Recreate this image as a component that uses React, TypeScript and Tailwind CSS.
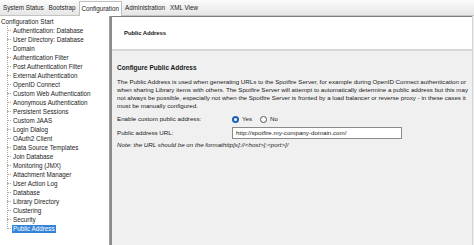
import React from "react";

const items = [
  "Authentication: Database",
  "User Directory: Database",
  "Domain",
  "Authentication Filter",
  "Post Authentication Filter",
  "External Authentication",
  "OpenID Connect",
  "Custom Web Authentication",
  "Anonymous Authentication",
  "Persistent Sessions",
  "Custom JAAS",
  "Login Dialog",
  "OAuth2 Client",
  "Data Source Templates",
  "Join Database",
  "Monitoring (JMX)",
  "Attachment Manager",
  "User Action Log",
  "Database",
  "Library Directory",
  "Clustering",
  "Security",
  "Public Address",
];

const tabs = ["System Status", "Bootstrap", "Configuration", "Administration", "XML View"];

export default function App() {
  return (
    <div
      className="w-[474px] h-[245px] bg-[#f0f0f0] flex flex-col overflow-hidden text-[#1a1a1a]"
      style={{ fontFamily: '"Liberation Sans", Arial, sans-serif' }}
    >
      {/* Tab bar */}
      <div className="h-[16px] flex items-end pl-[1px] bg-gradient-to-b from-[#fbfbfb] to-[#e6e6e6] border-b border-[#c4c4c4]">
        {tabs.map((t) => (
          <div
            key={t}
            className={
              t === "Configuration"
                ? "h-[15px] px-[2px] mr-[1px] flex items-center bg-white border border-b-0 border-[#c0c0c0] text-[6.3px] leading-none -mb-[1px]"
                : "h-[14px] px-[2px] mr-[1px] flex items-center text-[6.3px] leading-none text-[#222]"
            }
          >
            {t}
          </div>
        ))}
      </div>

      {/* Body */}
      <div className="flex-1 flex min-h-0">
        {/* Tree */}
        <div className="w-[110px] bg-white border-r border-[#9c9c9c] pt-[1px] relative">
          <div className="h-[9px] leading-[9px] pl-[1px] text-[6.3px] whitespace-nowrap">Configuration Start</div>
          <div className="relative">
            <div className="absolute left-[7px] top-0 h-[203px] border-l border-dotted border-[#a8a8a8]" />
            {items.map((it) => (
              <div key={it} className="h-[9px] flex items-center relative">
                <div className="w-[4px] ml-[7px] border-t border-dotted border-[#a8a8a8]" />
                <div
                  className={
                    it === "Public Address"
                      ? "ml-[1px] px-[1px] h-[8px] leading-[8px] text-[6.3px] whitespace-nowrap bg-[#3383d8] text-white"
                      : "ml-[1px] px-[1px] leading-[9px] text-[6.3px] whitespace-nowrap"
                  }
                >
                  {it}
                </div>
              </div>
            ))}
          </div>
        </div>

        {/* Right panel */}
        <div className="flex-1 flex flex-col border-l-2 border-[#8c8c8c] border-r border-r-[#d4d4d4] mr-[1px]">
          <div className="h-[35px] bg-white border-t border-[#7c7c7c] border-b-2 border-b-[#d8d8d8] flex items-center pl-[12px]">
            <span className="text-[6px] font-bold tracking-[-0.1px]">Public Address</span>
          </div>
          <div className="flex-1 pl-[5px] pt-[13px] text-[6.2px] leading-[8px]">
            <div className="font-bold text-[6.5px] mb-[6px]">Configure Public Address</div>
            <div className="whitespace-nowrap">
              <div>The Public Address is used when generating URLs to the Spotfire Server, for example during OpenID Connect authentication or</div>
              <div>when sharing Library items with others. The Spotfire Server will attempt to automatically determine a public address but this may</div>
              <div>not always be possible, especially not when the Spotfire Server is fronted by a load balancer or reverse proxy - in these cases it</div>
              <div>must be manually configured.</div>
            </div>
            <div className="flex items-center h-[14px] mt-[2px]">
              <div className="w-[115px]">Enable custom public address:</div>
              <div className="flex items-center gap-[2px]">
                <div className="w-[7px] h-[7px] rounded-full bg-[#1f5fb8] flex items-center justify-center">
                  <div className="w-[3px] h-[3px] rounded-full bg-white" />
                </div>
                <span className="ml-[1px]">Yes</span>
                <div className="ml-[6px] w-[7px] h-[7px] rounded-full border border-[#555] bg-white" />
                <span className="ml-[1px]">No</span>
              </div>
            </div>
            <div className="flex items-center h-[14px]">
              <div className="w-[115px]">Public address URL:</div>
              <div className="w-[170px] h-[12px] bg-white border border-[#8a8a8a] flex items-center pl-[3px]">
                http://spotfire.my-company-domain.com/
              </div>
            </div>
            <div className="italic mt-[1px]">Note: the URL should be on the formathttp[s]://&lt;host&gt;[:&lt;port&gt;]/</div>
          </div>
        </div>
      </div>
    </div>
  );
}
